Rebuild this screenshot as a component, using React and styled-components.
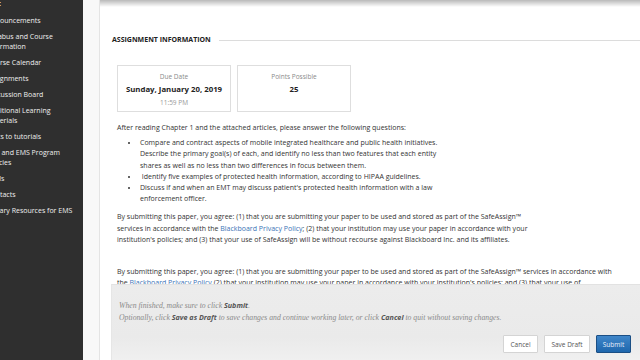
import React from "react";
import styled, { createGlobalStyle } from "styled-components";

const Global = createGlobalStyle`
  html, body { margin: 0; padding: 0; width: 640px; height: 360px; overflow: hidden; background: #fff; }
  body { font-family: "Open Sans", "Liberation Sans", sans-serif; }
  * { box-sizing: border-box; }
`;

const Page = styled.div`
  display: flex;
  width: 640px;
  height: 360px;
  overflow: hidden;
`;

const Sidebar = styled.nav`
  flex: 0 0 83px;
  background: #2f2f2f;
  color: #f0f0f0;
  overflow: hidden;
`;

const SideList = styled.div`
  margin-top: -4px;
  margin-left: -13px;
  width: 110px;
`;

const SideHead = styled.div`
  font-size: 7.5px;
  font-weight: 700;
  line-height: 14px;
  margin-bottom: 3px;
  margin-left: -6px;
  white-space: nowrap;
`;

const SideItem = styled.div`
  font-size: 7px;
  line-height: 10px;
  padding: 3px 0;
  white-space: nowrap;
`;

const Gutter = styled.div`
  flex: 0 0 17px;
  background: #f8f8f8;
  border-right: 1px solid #e4e4e4;
`;

const Main = styled.main`
  position: relative;
  flex: 1;
  background: #fff;
  padding: 33px 0 0 12px;
  color: #333;
  &::before {
    content: "";
    position: absolute;
    left: 0; right: 0; top: 0;
    height: 7px;
    background: linear-gradient(#b9b9b9, rgba(255,255,255,0));
  }
`;

const SectionHead = styled.div`
  display: flex;
  align-items: center;
  gap: 8px;
  font-size: 7px;
  font-weight: 700;
  color: #222;
  line-height: 14px;
  &::after {
    content: "";
    flex: 1;
    height: 1px;
    background: #dcdcdc;
  }
`;

const Body = styled.div`
  padding-left: 5px;
  padding-top: 18px;
  font-size: 7px;
  line-height: 11.2px;
`;

const Cards = styled.div`
  display: flex;
  gap: 6px;
`;

const Card = styled.div`
  width: 114px;
  height: 47px;
  border: 1px solid #dedede;
  display: flex;
  flex-direction: column;
  align-items: center;
  padding-top: 5px;
`;

const CardLabel = styled.div`
  font-size: 6.5px;
  line-height: 12px;
  color: #8a8a8a;
`;

const CardValue = styled.div`
  font-size: 7.8px;
  font-weight: 700;
  line-height: 13px;
  color: #222;
`;

const CardSub = styled.div`
  font-size: 6.5px;
  line-height: 13px;
  color: #999;
`;

const Para = styled.p`
  margin: ${p => p.$mt || 0}px 0 0;
  white-space: ${p => (p.$nowrap ? "nowrap" : "normal")};
`;

const List = styled.ul`
  margin: 4px 0 0;
  padding-left: 22px;
  list-style: disc;
  li { padding-left: 1px; }
  li::marker { font-size: 6px; }
`;

const Link = styled.a`
  color: #3a72b5;
  text-decoration: none;
`;

const Footer = styled.div`
  position: absolute;
  left: 11px;
  right: 0;
  bottom: 0;
  height: 76px;
  background: linear-gradient(180deg, #ececec 0%, #eaeaea 70%, #f0f0f0 100%);
  border-top: 1px solid #e2e2e2;
  border-left: 1px solid #e6e6e6;
  padding: 15px 9px 7px 7px;
  display: flex;
  flex-direction: column;
`;

const Note = styled.div`
  font-family: "Liberation Serif", "DejaVu Serif", serif;
  font-style: italic;
  font-size: 7.7px;
  line-height: 10.5px;
  color: #8a8a8a;
  b {
    font-family: "Open Sans", "Liberation Sans", sans-serif;
    font-weight: 700;
    color: #555;
    font-size: 7.2px;
  }
`;

const Actions = styled.div`
  margin-top: auto;
  display: flex;
  justify-content: flex-end;
  gap: 6px;
`;

const Btn = styled.button`
  height: 18px;
  width: ${p => p.$w}px;
  padding: 0;
  font-family: "Open Sans", "Liberation Sans", sans-serif;
  font-size: 6.5px;
  border-radius: 1px;
  border: 1px solid ${p => (p.$primary ? "#1b4f85" : "#d4d4d4")};
  background: ${p => (p.$primary ? "linear-gradient(#3f86c9, #1f67ad)" : "#fff")};
  color: ${p => (p.$primary ? "#e8f0fa" : "#555")};
`;

const sideItems = [
  ["Announcements"],
  ["Syllabus and Course", "Information"],
  ["Course Calendar"],
  ["Assignments"],
  ["Discussion Board"],
  ["Additional Learning", "Materials"],
  ["Links to tutorials"],
  ["MIC and EMS Program", "Policies"],
  ["Tools"],
  ["Contacts"],
  ["Library Resources for EMS"],
];

export default function App() {
  return (
    <>
      <Global />
      <Page>
        <Sidebar>
          <SideList>
            <SideHead>Topic</SideHead>
            {sideItems.map((lines, i) => (
              <SideItem key={i}>
                {lines.map((l, j) => (
                  <div key={j}>{l}</div>
                ))}
              </SideItem>
            ))}
          </SideList>
        </Sidebar>
        <Gutter />
        <Main>
          <SectionHead>ASSIGNMENT INFORMATION</SectionHead>
          <Body>
            <Cards>
              <Card>
                <CardLabel>Due Date</CardLabel>
                <CardValue>Sunday, January 20, 2019</CardValue>
                <CardSub>11:59 PM</CardSub>
              </Card>
              <Card>
                <CardLabel>Points Possible</CardLabel>
                <CardValue>25</CardValue>
              </Card>
            </Cards>
            <Para $mt={10}>
              After reading Chapter 1 and the attached articles, please answer the following questions:
            </Para>
            <List>
              <li>
                Compare and contract aspects of mobile integrated healthcare and public health initiatives.
                <br />
                Describe the primary goal(s) of each, and identify no less than two features that each entity
                <br />
                shares as well as no less than two differences in focus between them.
              </li>
              <li>&nbsp;Identify five examples of protected health information, according to HIPAA guidelines.</li>
              <li>
                Discuss if and when an EMT may discuss patient's protected health information with a law
                <br />
                enforcement officer.
              </li>
            </List>
            <Para $mt={7}>
              By submitting this paper, you agree: (1) that you are submitting your paper to be used and stored as part of the SafeAssign™
              <br />
              services in accordance with the <Link>Blackboard Privacy Policy</Link>; (2) that your institution may use your paper in accordance with your
              <br />
              institution's policies; and (3) that your use of SafeAssign will be without recourse against Blackboard Inc. and its affiliates.
            </Para>
            <Para $mt={21} $nowrap>
              By submitting this paper, you agree: (1) that you are submitting your paper to be used and stored as part of the SafeAssign™ services in accordance with
              <br />
              the <Link>Blackboard Privacy Policy</Link> (2) that your institution may use your paper in accordance with your institution's policies; and (3) that your use of
            </Para>
          </Body>
          <Footer>
            <Note>
              When finished, make sure to click <b>Submit</b>.
              <br />
              Optionally, click <b>Save as Draft</b> to save changes and continue working later, or click <b>Cancel</b> to quit without saving changes.
            </Note>
            <Actions>
              <Btn $w={35}>Cancel</Btn>
              <Btn $w={46}>Save Draft</Btn>
              <Btn $w={35} $primary>Submit</Btn>
            </Actions>
          </Footer>
        </Main>
      </Page>
    </>
  );
}
